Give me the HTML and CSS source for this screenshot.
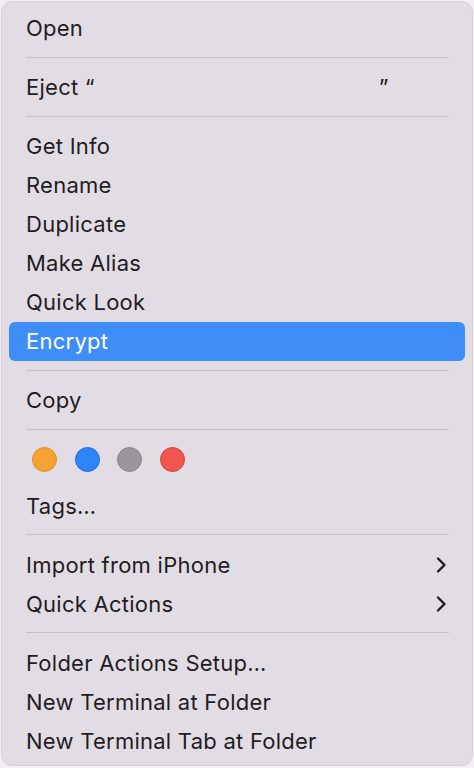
FILE: index.html
```html
<!DOCTYPE html>
<html>
<head>
<meta charset="utf-8">
<link rel="stylesheet" href="styles.css">
</head>
<body>
<div class="menu">
  <div class="item">Open</div>
  <div class="sep"></div>
  <div class="item">Eject “<span class="blank"></span>”</div>
  <div class="sep"></div>
  <div class="item">Get Info</div>
  <div class="item">Rename</div>
  <div class="item">Duplicate</div>
  <div class="item">Make Alias</div>
  <div class="item">Quick Look</div>
  <div class="item active">Encrypt</div>
  <div class="sep"></div>
  <div class="item">Copy</div>
  <div class="sep"></div>
  <div class="tags">
    <span class="dot orange"></span>
    <span class="dot blue"></span>
    <span class="dot gray"></span>
    <span class="dot red"></span>
  </div>
  <div class="item">Tags…</div>
  <div class="sep"></div>
  <div class="item sub">Import from iPhone
    <svg class="chev" width="12" height="18" viewBox="0 0 12 18"><path d="M3 2.5 L9.5 9 L3 15.5" fill="none" stroke="#1f1d22" stroke-width="2.4" stroke-linecap="round" stroke-linejoin="round"/></svg>
  </div>
  <div class="item sub">Quick Actions
    <svg class="chev" width="12" height="18" viewBox="0 0 12 18"><path d="M3 2.5 L9.5 9 L3 15.5" fill="none" stroke="#1f1d22" stroke-width="2.4" stroke-linecap="round" stroke-linejoin="round"/></svg>
  </div>
  <div class="sep"></div>
  <div class="item">Folder Actions Setup…</div>
  <div class="item">New Terminal at Folder</div>
  <div class="item">New Terminal Tab at Folder</div>
</div>
</body>
</html>
```
FILE: styles.css
```css
html, body {
  margin: 0;
  padding: 0;
  background: #f2f0f4;
}
body {
  width: 474px;
  height: 768px;
  overflow: hidden;
}
.menu {
  box-sizing: border-box;
  margin: 1px 1px 0 1px;
  width: 472px;
  height: 765px;
  background: #e2dde4;
  border: 1px solid #d6d2d9;
  border-radius: 11px;
  padding: 6.5px 0 0 0;
  font-family: Inter, "Noto Sans", sans-serif;
  font-size: 22px;
  color: #1f1d22;
}
.item {
  height: 39px;
  display: flex;
  align-items: center;
  padding: 0 17px;
  margin: 0 7px;
  border-radius: 6px;
  letter-spacing: 0.25px;
}
.item.active {
  background: #3f8ef8;
  color: #ffffff;
}
.sub {
  justify-content: space-between;
  padding-right: 24px;
}
.chev {
  margin-right: -6px;
}
.blank {
  display: inline-block;
  width: 284px;
}
.sep {
  height: 1px;
  background: #c7c2ca;
  margin: 9px 23px 10px 24px;
}
.tags {
  height: 46.5px;
  display: flex;
  align-items: flex-start;
  padding: 7px 0 0 30px;
  gap: 17.5px;
  box-sizing: border-box;
}
.dot {
  width: 25px;
  height: 25px;
  border-radius: 50%;
  box-sizing: border-box;
}
.orange { background: #f5a133; border: 1px solid #e38f26; }
.blue { background: #2f84f7; border: 1px solid #1c6ee0; }
.gray { background: #99979c; border: 1px solid #87858b; }
.red { background: #f1574f; border: 1px solid #dc3f3a; }
```
